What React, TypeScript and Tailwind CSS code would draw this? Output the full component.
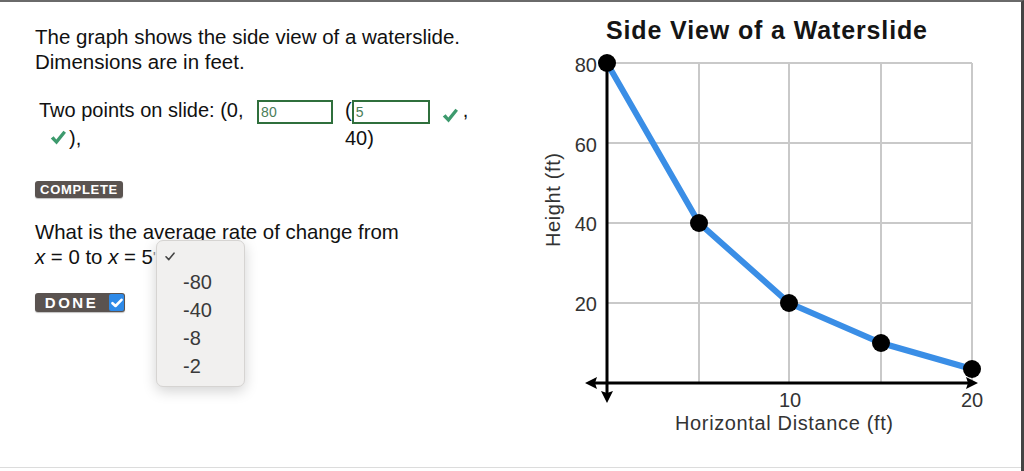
import React from 'react';

function GreenCheck() {
    return (
        <svg width="17" height="16" viewBox="0 0 17 16" className="inline-block">
            <path d="M0.8 8.6 L3.6 6.3 L6.3 9.4 L13.4 0.8 L16 2.8 L6.6 14.6 Z" fill="#3d9a6d" />
        </svg>
    );
}

function Chart() {
    const pts = [
        [607, 63],
        [699, 223],
        [789, 303],
        [881, 343],
        [972, 369],
    ];
    const font = "'Liberation Sans', Arial, sans-serif";

    return (
        <svg width="501" height="464" viewBox="520 2 501 464" style={{ fontFamily: font }}>
            <text x="606" y="39" fontSize="25" fontWeight="700" fill="#151515" textLength="321" lengthAdjust="spacing">
                Side View of a Waterslide
            </text>

            {/* grid */}
            {[63, 143, 223, 303].map((y) => (
                <line key={y} x1="607" y1={y} x2="972" y2={y} stroke="#c9c9c9" strokeWidth="2" />
            ))}
            {[699, 789, 881, 972].map((x) => (
                <line key={x} x1={x} y1="63" x2={x} y2="383" stroke="#c9c9c9" strokeWidth="2" />
            ))}

            {/* axes */}
            <line x1="592" y1="383" x2="970" y2="383" stroke="#000" strokeWidth="3" />
            <path d="M585 383 L597 377 L595 383 L597 389 Z" fill="#000" />
            <path d="M978 383 L966 377 L968 383 L966 389 Z" fill="#000" />
            <line x1="607" y1="63" x2="607" y2="396" stroke="#000" strokeWidth="3" />
            <path d="M607 403 L601 391 L607 393 L613 391 Z" fill="#000" />

            {/* tick labels */}
            {[
                ['80', 72],
                ['60', 152],
                ['40', 231],
                ['20', 311],
            ].map(([t, y]) => (
                <text key={t} x="597" y={y} fontSize="20" textAnchor="end" fill="#333">
                    {t}
                </text>
            ))}
            <text x="790" y="407" fontSize="20" textAnchor="middle" fill="#333">10</text>
            <text x="972" y="407" fontSize="20" textAnchor="middle" fill="#333">20</text>

            <text x="675" y="430" fontSize="20" fill="#333" textLength="218" lengthAdjust="spacing">
                Horizontal Distance (ft)
            </text>
            <text
                x="0"
                y="0"
                fontSize="20"
                fill="#333"
                textAnchor="middle"
                transform="translate(560 200) rotate(-90)"
                textLength="94"
                lengthAdjust="spacing"
            >
                Height (ft)
            </text>

            {/* slide */}
            <polyline
                points={pts.map((p) => p.join(',')).join(' ')}
                fill="none"
                stroke="#3a8ee6"
                strokeWidth="6"
                strokeLinejoin="round"
                strokeLinecap="round"
            />
            {pts.map(([x, y]) => (
                <circle key={x} cx={x} cy={y} r="9" fill="#000" />
            ))}
        </svg>
    );
}

export default function App() {
    return (
        <div className="w-[1024px] h-[471px] bg-white overflow-hidden border-t-2 border-t-[#6a6a6a] border-r-[3px] border-r-[#444] font-['Liberation_Sans',Arial,sans-serif] text-[#111]">
            <div className="h-[466px] flex border-b border-b-[#dcdcdc]">
                {/* Question column */}
                <div className="relative w-[520px] pl-[35px] pt-[22px]">
                    <p className="text-[20.5px] leading-[25px]">
                        The graph shows the side view of a waterslide.
                        <br />
                        Dimensions are in feet.
                    </p>

                    {/* Two points row */}
                    <div className="mt-[22px] pl-1 flex text-[20px] leading-[28px]">
                        <div className="w-[306px]">
                            <div className="flex items-start h-[28px]">
                                <span className="whitespace-pre">Two points on slide: (0, </span>
                                <span className="mt-[4px] ml-[8px] w-[76px] h-[24px] border-2 border-[#2f6f3c] text-[14px] leading-[20px] pl-[2px] text-[#4a7d58]">
                                    80
                                </span>
                            </div>
                            <div className="flex items-center h-[28px] pl-[11px]">
                                <GreenCheck />
                                <span className="ml-[2px]">),</span>
                            </div>
                        </div>
                        <div>
                            <div className="flex items-start h-[28px]">
                                <span>(</span>
                                <span className="mt-[4px] w-[78px] h-[24px] border-2 border-[#2f6f3c] text-[14px] leading-[20px] pl-[2px] text-[#4a7d58]">
                                    5
                                </span>
                                <span className="ml-[12px] mt-[4px]">
                                    <GreenCheck />
                                </span>
                                <span className="ml-[4px]">,</span>
                            </div>
                            <div className="h-[28px]">40)</div>
                        </div>
                    </div>

                    <div className="mt-[29px] w-[88px] h-[17px] rounded-[3px] bg-[#5a5350] text-white text-[13px] leading-[17px] font-bold tracking-[0.7px] text-center shadow-[0_1px_1px_rgba(0,0,0,0.25)]">
                        COMPLETE
                    </div>

                    <p className="mt-[22px] text-[20.4px] leading-[25px]">
                        What is the average rate of change from
                        <br />
                        <i>x</i> = 0 to <i>x</i> = 5<span className="text-[#888] text-[14px] align-top">'</span>
                    </p>

                    <div className="mt-[23px] flex w-[90px] h-[19px] rounded-[3px] bg-[#5a5350] shadow-[0_1px_1px_rgba(0,0,0,0.25)] overflow-hidden">
                        <div className="w-[73px] text-white text-[15px] leading-[19px] font-bold tracking-[2.5px] text-center">
                            DONE
                        </div>
                        <div className="flex-1 flex items-center justify-center bg-[#2e8ae8] m-[1px] rounded-[2px]">
                            <svg width="12" height="10" viewBox="0 0 12 10">
                                <path d="M1.5 5.2 L4.5 8 L10.5 1.8" fill="none" stroke="#fff" strokeWidth="2.6" strokeLinecap="round" strokeLinejoin="round" />
                            </svg>
                        </div>
                    </div>

                    {/* open select menu */}
                    <div className="absolute left-[156px] top-[238px] w-[89px] h-[147px] rounded-[7px] bg-[#f1f0ef] border border-[#d6d4d2] shadow-[0_4px_14px_rgba(0,0,0,0.18)] pt-[3px] text-[20px] text-[#3a3a3a]">
                        <div className="h-[24px] flex items-center pl-[8px]">
                            <svg width="10" height="9" viewBox="0 0 10 9">
                                <path d="M1 4.8 L3.8 7.6 L9 1.2" fill="none" stroke="#444" strokeWidth="1.6" strokeLinecap="round" strokeLinejoin="round" />
                            </svg>
                        </div>
                        {['-80', '-40', '-8', '-2'].map((v) => (
                            <div key={v} className="h-[28px] leading-[28px] pl-[26px]">
                                {v}
                            </div>
                        ))}
                    </div>
                </div>

                {/* Chart column */}
                <div className="flex-1">
                    <Chart />
                </div>
            </div>
        </div>
    );
}
